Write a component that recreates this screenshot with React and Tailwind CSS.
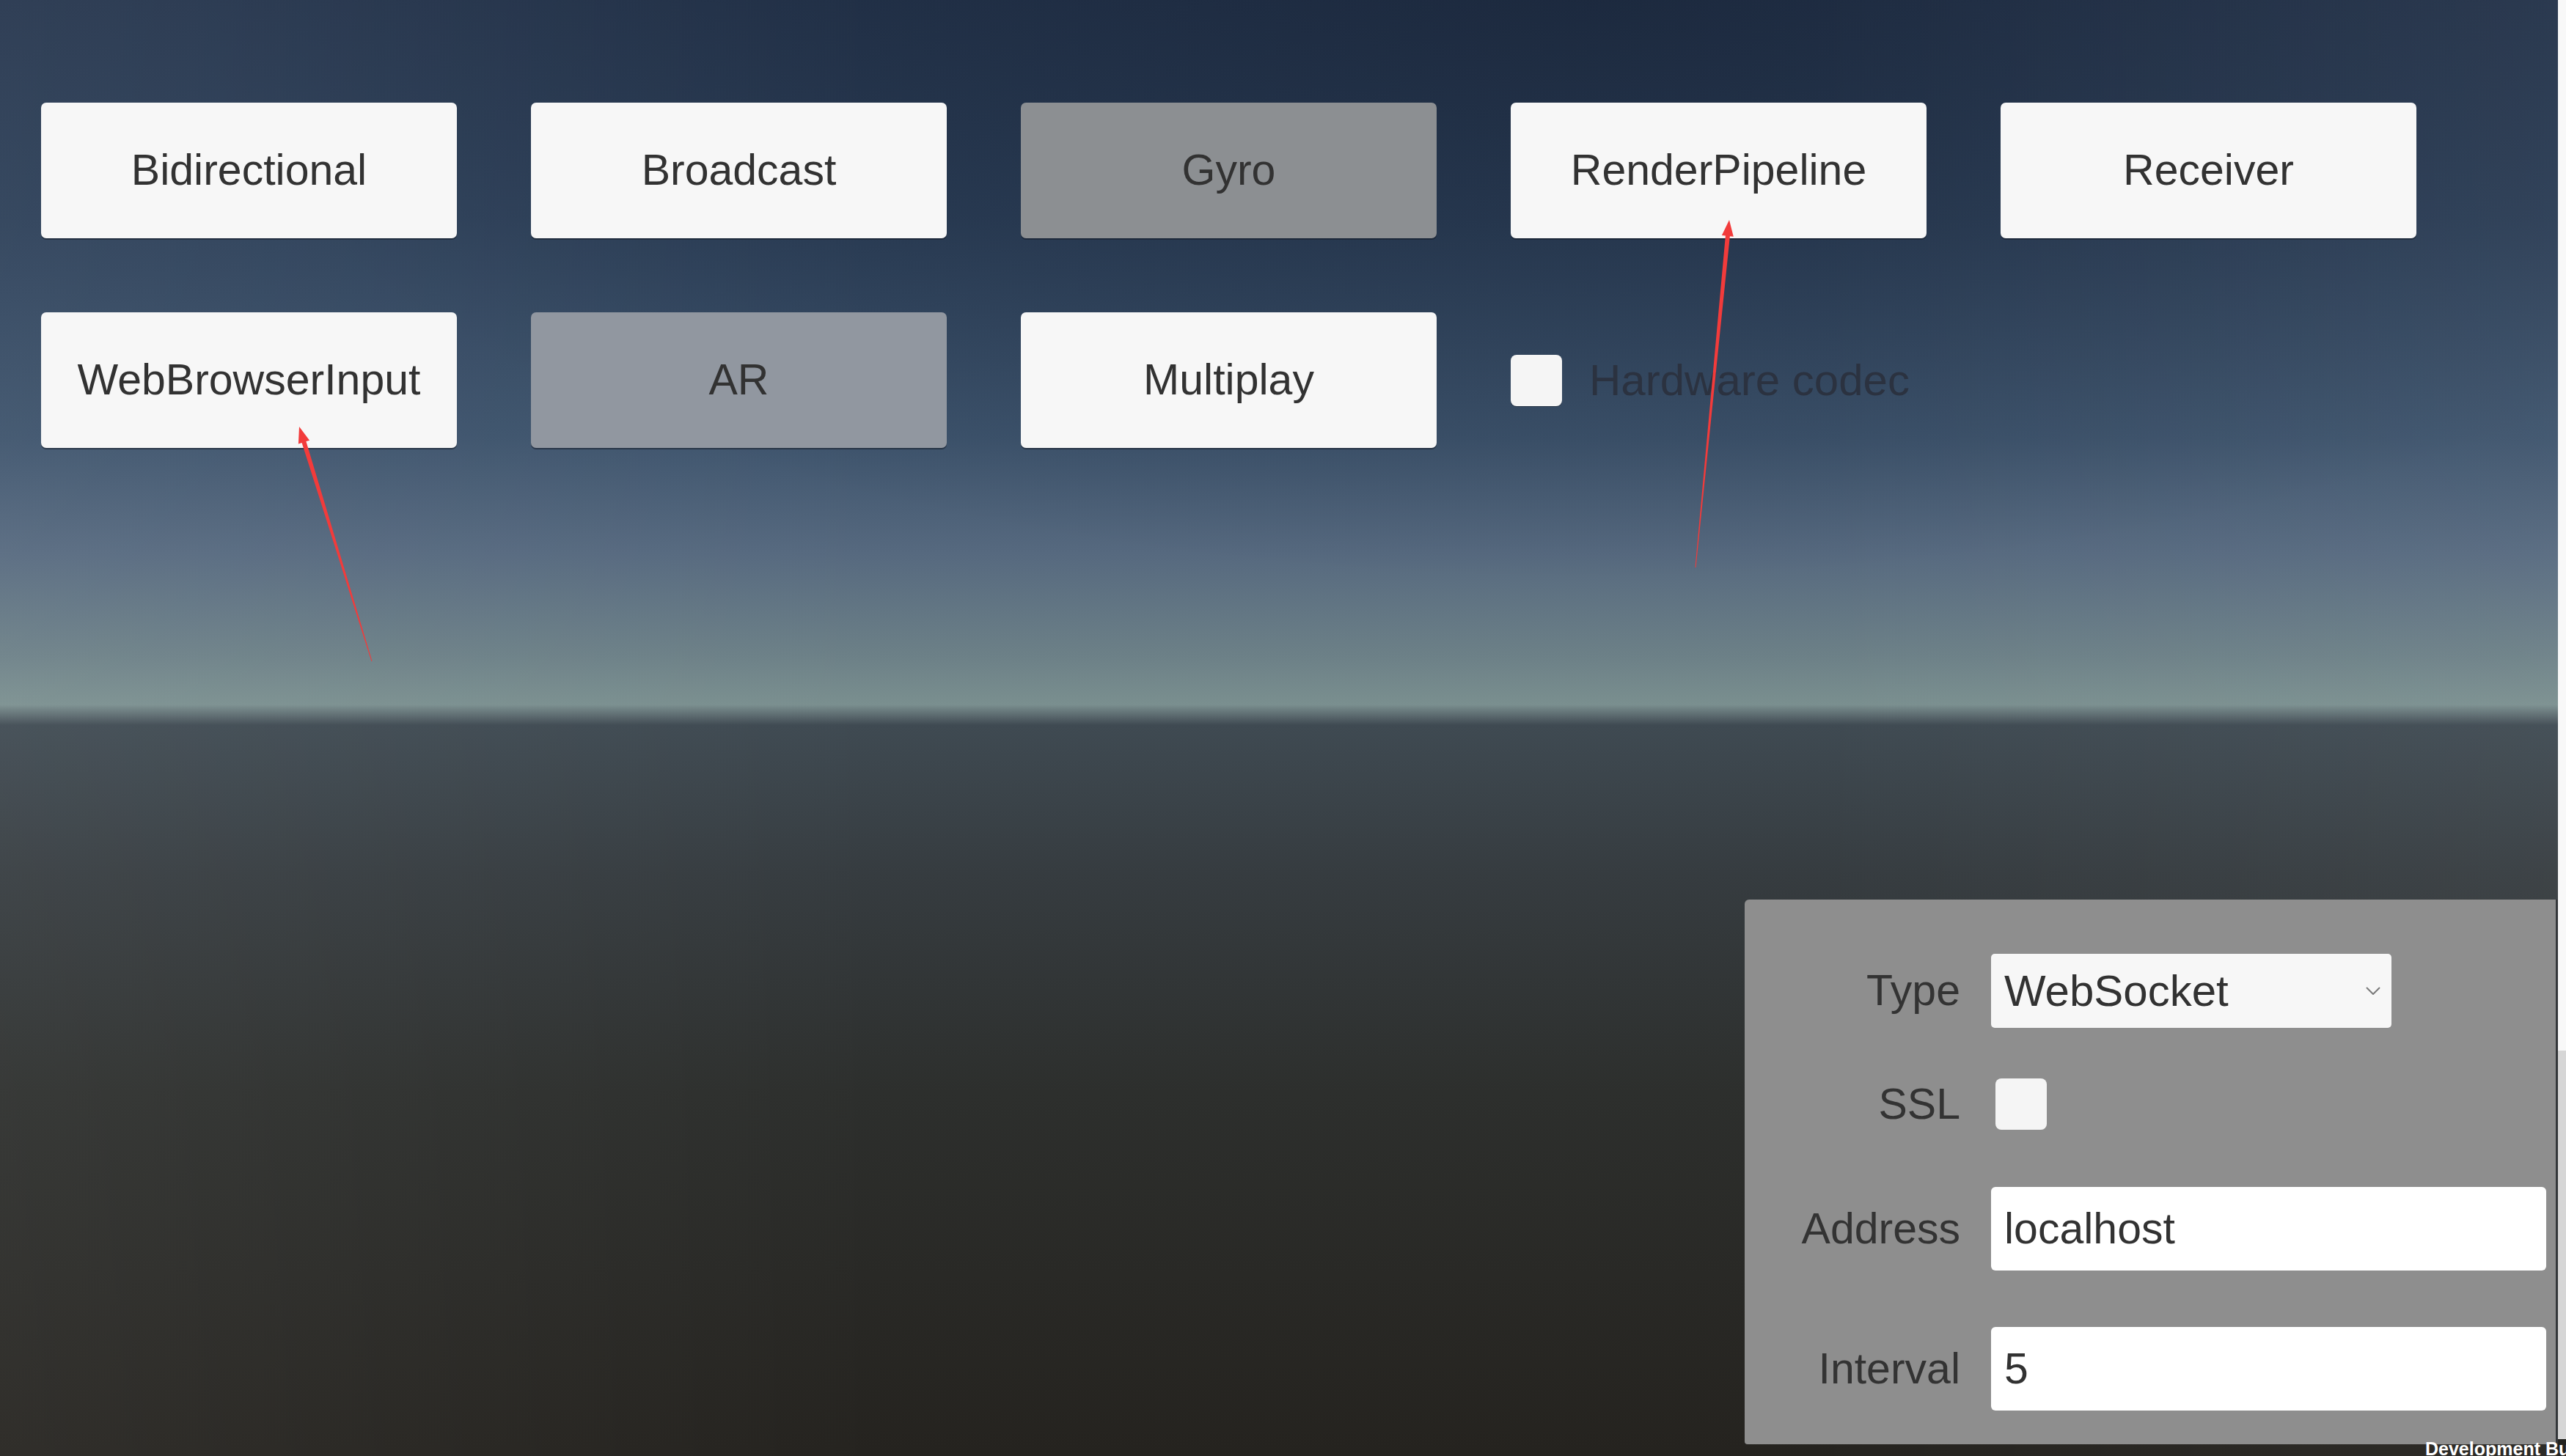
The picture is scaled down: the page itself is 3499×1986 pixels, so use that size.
const ROW_ONE = [
  { label: 'Bidirectional' },
  { label: 'Broadcast' },
  { label: 'Gyro', disabled: true, tone: 'bg-[#8c8f92]' },
  { label: 'RenderPipeline' },
  { label: 'Receiver' },
]

const ROW_TWO = [
  { label: 'WebBrowserInput' },
  { label: 'AR', disabled: true, tone: 'bg-[#9197a0]' },
  { label: 'Multiplay' },
]

// red annotation arrows, [tail, tip] in page pixels
const ARROWS = [
  [[507, 902], [408, 582]],
  [[2312, 774], [2358, 300]],
]

function arrowPoints(tail, tip) {
  const dx = tip[0] - tail[0]
  const dy = tip[1] - tail[1]
  const len = Math.hypot(dx, dy)
  const ux = dx / len
  const uy = dy / len
  const nx = -uy
  const ny = ux
  const head = 22
  const hw = 8
  const sw = 3
  const tw = 0.5
  const bx = tip[0] - ux * head
  const by = tip[1] - uy * head
  const p = (x, y) => `${x.toFixed(1)},${y.toFixed(1)}`
  return [
    p(tail[0] + nx * tw, tail[1] + ny * tw),
    p(bx + nx * sw, by + ny * sw),
    p(bx + nx * hw, by + ny * hw),
    p(tip[0], tip[1]),
    p(bx - nx * hw, by - ny * hw),
    p(bx - nx * sw, by - ny * sw),
    p(tail[0] - nx * tw, tail[1] - ny * tw),
  ].join(' ')
}

function SceneButton({ label, disabled, tone }) {
  return (
    <button
      className={`flex items-center justify-center rounded-[7px] text-[59px] leading-none text-[#323232] shadow-[0_2px_0_rgba(20,28,40,0.55)] ${
        disabled ? tone : 'bg-[#f7f7f7]'
      }`}
    >
      {label}
    </button>
  )
}

function Field({ label, children }) {
  return (
    <div className="grid grid-cols-[294px_1fr] items-center gap-x-[42px]">
      <span className="text-right text-[59px] leading-none text-[#333333]">{label}</span>
      {children}
    </div>
  )
}

export default function App() {
  return (
    <div
      className="relative flex h-[1986px] w-[3499px] overflow-hidden bg-[#22221f]"
      style={{ fontFamily: '"Liberation Sans", Arial, sans-serif' }}
    >
      {/* Scene */}
      <div className="relative flex flex-1 flex-col bg-[linear-gradient(180deg,#25354d_0%,#2c3f58_15%,#3d536c_30%,#56697f_38%,#6c8087_45%,#7a8f8f_48.4%,#59676c_49.2%,#3f4a52_49.8%,#363c40_60%,#2d2f2d_75%,#25231f_100%)]">
        <div className="pointer-events-none absolute inset-0 bg-[radial-gradient(ellipse_55%_40%_at_62%_0%,rgba(12,20,36,0.35),transparent)]" />
        <div className="pointer-events-none absolute inset-0 bg-[linear-gradient(90deg,rgba(255,255,255,0.05),transparent_35%,transparent_70%,rgba(255,255,255,0.04))]" />

        {/* Scene buttons */}
        <div className="relative ml-[56px] mt-[140px] grid grid-cols-[repeat(5,567px)] grid-rows-[185px_185px] gap-x-[101px] gap-y-[101px]">
          {ROW_ONE.map((b) => (
            <SceneButton key={b.label} {...b} />
          ))}
          {ROW_TWO.map((b) => (
            <SceneButton key={b.label} {...b} />
          ))}
          <div className="flex items-center gap-[37px]">
            <div className="h-[70px] w-[70px] rounded-[8px] bg-[#f5f5f5] shadow-[0_1px_0_rgba(20,28,40,0.5)]" />
            <span className="text-[60px] leading-none text-[#2b3240]">Hardware codec</span>
          </div>
        </div>

        <div className="flex-1" />

        {/* Signaling settings */}
        <div className="relative mb-[16px] flex w-[1109px] flex-col self-end rounded-tl-[6px] rounded-bl-[4px] border-r-[3px] border-[#34373a] bg-[#8e8e8e] pb-[46px] pr-[13px] pt-[74px]">
          <Field label="Type">
            <div className="flex h-[101px] w-[546px] items-center justify-between rounded-[5px] bg-[#f7f7f7] pl-[18px] pr-[15px]">
              <span className="text-[60px] leading-none text-[#323232]">WebSocket</span>
              <svg width="20" height="11" viewBox="0 0 20 11" fill="none">
                <path d="M1 1l9 9 9-9" stroke="#7a7a7a" strokeWidth="2" />
              </svg>
            </div>
          </Field>
          <div className="mt-[69px]">
            <Field label="SSL">
              <div className="ml-[6px] h-[70px] w-[70px] rounded-[8px] bg-[#f5f5f5]" />
            </Field>
          </div>
          <div className="mt-[78px]">
            <Field label="Address">
              <div className="flex h-[114px] items-center rounded-[6px] bg-white pl-[18px]">
                <span className="text-[59px] leading-none text-[#323232]">localhost</span>
              </div>
            </Field>
          </div>
          <div className="mt-[77px]">
            <Field label="Interval">
              <div className="flex h-[114px] items-center rounded-[6px] bg-white pl-[18px]">
                <span className="text-[59px] leading-none text-[#323232]">5</span>
              </div>
            </Field>
          </div>
        </div>
      </div>

      {/* Window edge */}
      <div className="flex w-[11px] flex-col">
        <div className="h-[1433px] bg-[#f8f8f8]" />
        <div className="h-[530px] bg-[#d6d6d6]" />
        <div className="flex-1 bg-[#22221f]" />
      </div>

      <span className="absolute left-[3307px] top-[1964px] whitespace-nowrap text-[25px] font-bold leading-none text-white">
        Development Build
      </span>

      {/* Annotation arrows */}
      <svg className="pointer-events-none absolute inset-0" width="3499" height="1986" viewBox="0 0 3499 1986">
        {ARROWS.map(([tail, tip], i) => (
          <polygon key={i} points={arrowPoints(tail, tip)} fill="#f23b3b" />
        ))}
      </svg>
    </div>
  )
}
